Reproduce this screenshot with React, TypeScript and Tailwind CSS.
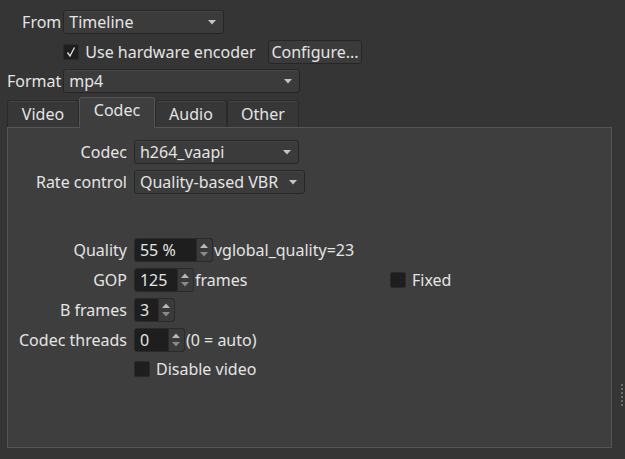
import React from 'react';

const Arrow: React.FC = () => (
  <svg width="8" height="5" viewBox="0 0 8 5" className="shrink-0">
    <path d="M0 0h8L4 4.5z" fill="#c4c4c4" />
  </svg>
);

const Combo: React.FC<{ value: string; width: string }> = ({ value, width }) => (
  <div
    className={`${width} h-[24px] flex items-center justify-between pl-[5px] pr-[7px] rounded-[3px] border border-[#262626] bg-[#3b3b3b] shadow-[inset_0_1px_0_#454545]`}
  >
    <span className="leading-none">{value}</span>
    <Arrow />
  </div>
);

const Spin: React.FC<{ value: string; width: string }> = ({ value, width }) => (
  <div className={`${width} h-[24px] flex rounded-[3px] border border-[#2a2a2a] bg-[#1e1e1e] overflow-hidden`}>
    <span className="flex-1 flex items-center pl-[5px] leading-none">{value}</span>
    <div className="w-[16px] flex flex-col items-center justify-center gap-[4px] bg-[#3a3a3a] border-l border-[#2a2a2a]">
      <svg width="8" height="5" viewBox="0 0 8 5">
        <path d="M0 5h8L4 0.5z" fill="#b8b8b8" />
      </svg>
      <svg width="8" height="5" viewBox="0 0 8 5">
        <path d="M0 0h8L4 4.5z" fill="#8a8a8a" />
      </svg>
    </div>
  </div>
);

const Check: React.FC<{ checked?: boolean; label: string }> = ({ checked, label }) => (
  <div className="flex items-center gap-[6px]">
    <div className="w-[16px] h-[16px] flex items-center justify-center rounded-[2px] border border-[#2a2a2a] bg-[#1e1e1e]">
      {checked && (
        <svg width="12" height="12" viewBox="0 0 12 12">
          <path d="M2.5 6.5l2.5 3.5L9.5 1.5" stroke="#e0e0e0" strokeWidth="1.3" fill="none" />
        </svg>
      )}
    </div>
    <span className="leading-none">{label}</span>
  </div>
);

const Label: React.FC<{ children: React.ReactNode }> = ({ children }) => (
  <span className="text-right leading-none self-center">{children}</span>
);

export default function App() {
  const tabs = [
    { name: 'Video', w: 'w-[72px]' },
    { name: 'Codec', w: 'w-[76px]', active: true },
    { name: 'Audio', w: 'w-[72px]' },
    { name: 'Other', w: 'w-[72px]' },
  ];

  return (
    <div
      className="w-[625px] h-[459px] flex bg-[#353535] text-[#e4e4e4] text-[16px] overflow-hidden"
      style={{ fontFamily: '"Noto Sans", "Open Sans", sans-serif' }}
    >
      <div className="w-[612px] pl-[7px] pt-[10px] flex flex-col">
        {/* top form */}
        <div className="grid grid-cols-[auto_1fr] gap-x-[2px] gap-y-[5px]">
          <Label>From</Label>
          <Combo value="Timeline" width="w-[161px]" />
          <div />
          <div className="h-[25px] flex items-center">
            <Check checked label="Use hardware encoder" />
            <div className="ml-auto mr-[250px] h-[24px] w-[94px] flex items-center justify-center rounded-[3px] border border-[#262626] bg-[#3b3b3b] leading-none">
              Configure...
            </div>
          </div>
          <Label>Format</Label>
          <Combo value="mp4" width="w-[237px]" />
        </div>

        {/* tabs */}
        <div className="flex items-end mt-[4px] h-[30px]">
          {tabs.map((t) =>
            t.active ? (
              <div
                key={t.name}
                className={`${t.w} h-[31px] -mb-px z-10 flex items-start justify-center pt-[4px] rounded-t-[3px] border border-b-0 border-[#555555] bg-[#3e3e3e] leading-none`}
              >
                {t.name}
              </div>
            ) : (
              <div
                key={t.name}
                className={`${t.w} h-[27px] flex items-center justify-center rounded-t-[3px] border border-[#2a2a2a] border-b-0 bg-[#373737] shadow-[inset_0_1px_0_#444444] leading-none`}
              >
                {t.name}
              </div>
            )
          )}
        </div>

        {/* panel */}
        <div className="w-[605px] h-[321px] border border-[#555555] bg-[#3e3e3e] pl-[11px] pt-[12px]">
          <div className="grid grid-cols-[auto_1fr] gap-x-[7px] gap-y-[6px]">
            <Label>Codec</Label>
            <Combo value="h264_vaapi" width="w-[165px]" />
            <Label>Rate control</Label>
            <Combo value="Quality-based VBR" width="w-[171px]" />

            <div className="col-span-2 h-[32px]" />

            <Label>Quality</Label>
            <div className="flex items-center">
              <Spin value="55 %" width="w-[79px]" />
              <span className="leading-none pl-[1px]">vglobal_quality=23</span>
            </div>
            <Label>GOP</Label>
            <div className="flex items-center">
              <div className="w-[256px] flex items-center">
                <Spin value="125" width="w-[60px]" />
                <span className="leading-none pl-[1px]">frames</span>
              </div>
              <Check label="Fixed" />
            </div>
            <Label>B frames</Label>
            <div className="flex items-center">
              <Spin value="3" width="w-[41px]" />
            </div>
            <Label>Codec threads</Label>
            <div className="flex items-center">
              <Spin value="0" width="w-[51px]" />
              <span className="leading-none pl-[1px]">(0 = auto)</span>
            </div>
            <div />
            <div className="pt-[3px]">
              <Check label="Disable video" />
            </div>
          </div>
        </div>
      </div>

      {/* splitter handle */}
      <div className="flex-1 flex flex-col items-end pr-[2px] pt-[384px] gap-[2px]">
        {[0, 1, 2, 3, 4, 5].map((i) => (
          <div key={i} className="w-[2px] h-[2px] bg-[#6a6a6a]" />
        ))}
      </div>
    </div>
  );
}
